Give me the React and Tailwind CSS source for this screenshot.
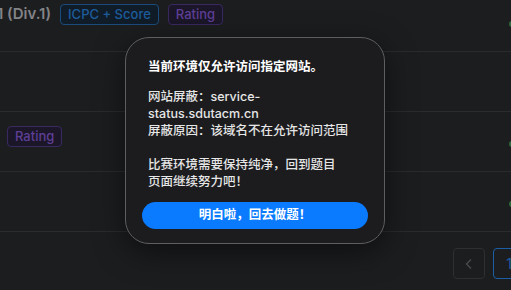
import React from "react";

const font = { fontFamily: '"Inter", "Noto Sans CJK SC", sans-serif' };

function Badge({ kind, children }) {
  const cls =
    kind === "blue"
      ? "border-[#1b4b7c] bg-[#111c29] text-[#1d5c9c]"
      : "border-[#3a2860] bg-[#1b1628] text-[#5e3f96]";
  return (
    <span className={`inline-flex h-[21px] items-center rounded-[4px] border px-[7px] text-[13px] font-medium ${cls}`}>
      {children}
    </span>
  );
}

function Row({ children, dot }) {
  return (
    <div className="relative flex h-[60px] items-start border-b border-[#2a2b2e] pt-[11px]">
      {children}
      {dot ? <span className="absolute right-[-4px] top-[29px] h-[6px] w-[6px] rounded-full bg-[#2f6b3b]" /> : null}
    </div>
  );
}

export default function App() {
  return (
    <div className="relative h-[290px] w-[511px] overflow-hidden bg-[#1c1d1f]" style={font}>
      <div className="-mt-2">
        <Row dot>
          <div className="flex items-center gap-[9px]">
            <span className="-ml-[3px] text-[15px] font-semibold text-[#838488]">1 (Div.1)</span>
            <Badge kind="blue">ICPC + Score</Badge>
            <Badge kind="purple">Rating</Badge>
          </div>
        </Row>
        <Row />
        <Row dot>
          <div className="pl-[7px]">
            <Badge kind="purple">Rating</Badge>
          </div>
        </Row>
        <Row dot />
      </div>

      <div className="mt-[16px] flex justify-end gap-2">
        <button className="flex h-[31px] w-[32px] items-center justify-center rounded-[4px] border border-[#2e2f32] text-[#4a4b4f]">
          <svg width="10" height="12" viewBox="0 0 10 12" fill="none">
            <path d="M7 1.5L2.5 6L7 10.5" stroke="currentColor" strokeWidth="1.3" />
          </svg>
        </button>
        <button className="-mr-[14px] flex h-[31px] w-[32px] items-center justify-center rounded-[4px] border border-[#1b5ea6] text-[14px] text-[#1b5ea6]">
          1
        </button>
      </div>

      <div className="absolute left-[125px] top-[37px] flex h-[207px] w-[260px] flex-col rounded-[24px] border border-[#5d5e61] bg-[#1c1c1e] px-4 pb-[14px] pt-[20px] shadow-[0_8px_30px_rgba(0,0,0,0.5)]">
        <div className="px-[6px] text-[12.5px] leading-[17px] text-[#e6e6e6]">
          <p className="font-bold text-white">当前环境仅允许访问指定网站。</p>
          <p className="mt-[13px] font-medium">
            网站屏蔽：service-
            <br />
            status.sdutacm.cn
            <br />
            屏蔽原因：该域名不在允许访问范围
          </p>
          <p className="mt-[17px] font-medium">
            比赛环境需要保持纯净，回到题目
            <br />
            页面继续努力吧！
          </p>
        </div>
        <button className="mt-auto flex h-[27px] w-full items-center justify-center rounded-full bg-[#0a7aff] text-[12.5px] font-bold text-white">
          明白啦，回去做题！
        </button>
      </div>
    </div>
  );
}
